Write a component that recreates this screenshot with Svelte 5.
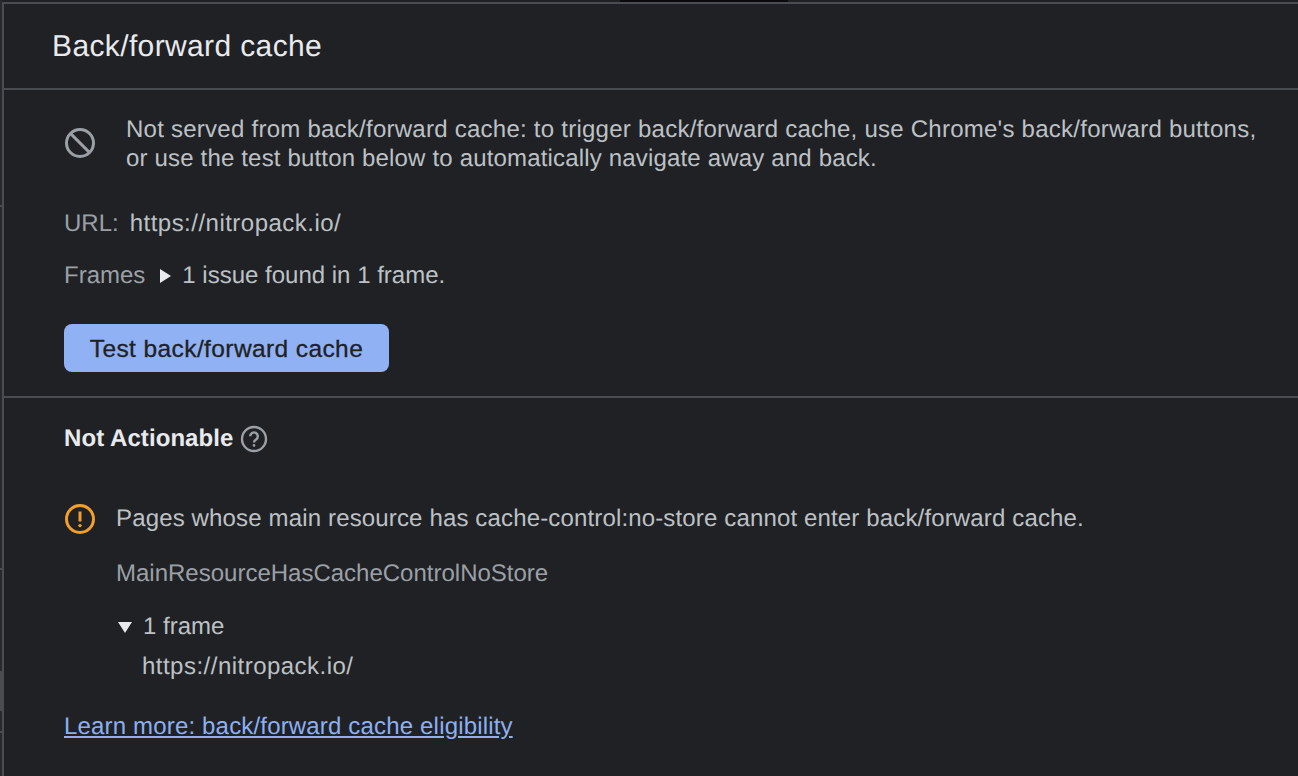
<script>
  const frameUrl = 'https://nitropack.io/';
  // bits of the neighbouring pane that show through the left rail
  const railMarks = [
    { top: 205, height: 2, color: '#494c50' },
    { top: 568, height: 2, color: '#494c50' },
    { top: 671, height: 40, color: '#4b4d4c' },
    { top: 731, height: 2, color: '#494c50' }
  ];
</script>

<div class="shell">
  <div class="notch"></div>
  <div class="rail">
    {#each railMarks as m}
      <span style="top:{m.top}px;height:{m.height}px;background:{m.color}"></span>
    {/each}
  </div>
  <main class="panel">
    <header class="title"><h1>Back/forward cache</h1></header>

    <section class="status">
      <div class="banner">
        <svg class="ban" viewBox="0 0 32 32" aria-hidden="true">
          <circle cx="16" cy="16" r="13.5" />
          <path d="M6.6 6.6 25.4 25.4" />
        </svg>
        <p>
          <span class="line-a">Not served from back/forward cache: to trigger back/forward cache, use Chrome's back/forward buttons,</span>
          <span class="line-b">or use the test button below to automatically navigate away and back.</span>
        </p>
      </div>
      <div class="row url"><span class="key">URL:</span><span class="link-text">{frameUrl}</span></div>
      <div class="row frames">
        <span class="key">Frames</span>
        <span class="tri right"></span>
        <span>1 issue found in 1 frame.</span>
      </div>
      <button class="test">Test back/forward cache</button>
    </section>

    <section class="issues">
      <h2>
        Not Actionable
        <svg class="help" viewBox="0 0 28 28" aria-hidden="true">
          <circle cx="14" cy="14" r="12" />
          <path d="M10.2 11.2a3.8 3.8 0 1 1 5.9 3.2c-1.3.8-2.1 1.5-2.1 3" />
          <circle class="dot" cx="14" cy="20.4" r="1.3" />
        </svg>
      </h2>
      <div class="issue">
        <svg class="warn" viewBox="0 0 32 32" aria-hidden="true">
          <circle cx="16" cy="16" r="13.5" />
          <path d="M16 8.5v10" />
          <circle class="dot" cx="16" cy="22.6" r="1.7" />
        </svg>
        <span>Pages whose main resource has cache-control:no-store cannot enter back/forward cache.</span>
      </div>
      <div class="detail reason">MainResourceHasCacheControlNoStore</div>
      <div class="detail count"><span class="tri down"></span><span>1 frame</span></div>
      <div class="detail frame-url"><span class="link-text">{frameUrl}</span></div>
      <a class="more" href="#eligibility">Learn more: back/forward cache eligibility</a>
    </section>
  </main>
</div>

<style>
  :global(body) {
    margin: 0;
    background: #202124;
  }
  .shell {
    position: relative;
    display: flex;
    height: 776px;
    overflow: hidden;
    background: #202124;
    font-family: "Liberation Sans", Arial, sans-serif;
    font-size: 24px;
    text-rendering: geometricPrecision;
    color: #bdc1c6;
  }
  .notch {
    position: absolute;
    top: 0;
    left: 620px;
    width: 168px;
    height: 2px;
    background: #0a0a0a;
  }
  .rail {
    position: relative;
    flex: none;
    width: 2px;
    background: #28292c;
  }
  .rail span {
    position: absolute;
    left: 0;
    width: 100%;
  }
  .panel {
    flex: 1;
    box-sizing: border-box;
    border-top: 2px solid #494c50;
    border-left: 2px solid #494c50;
    margin-top: 2px;
  }
  .title {
    height: 86px;
    box-sizing: border-box;
    border-bottom: 2px solid #494c50;
    padding: 2px 0 0 48px;
    display: flex;
    align-items: center;
  }
  h1 {
    margin: 0;
    font-size: 30px;
    letter-spacing: 0.37px;
    font-weight: 400;
    color: #e8eaed;
  }
  .status {
    height: 308px;
    box-sizing: border-box;
    border-bottom: 2px solid #494c50;
    padding: 25px 0 0 60px;
  }
  .banner {
    display: flex;
    align-items: center;
    gap: 30px;
  }
  .banner p {
    margin: 0;
    line-height: 29px;
  }
  .line-a,
  .line-b {
    display: block;
    white-space: nowrap;
  }
  .line-a {
    letter-spacing: 0.25px;
  }
  .line-b {
    letter-spacing: 0.17px;
  }
  .ban {
    width: 32px;
    height: 32px;
    flex: none;
    fill: none;
    stroke: #9aa0a6;
    stroke-width: 3;
    margin-top: -2px;
  }
  .row {
    display: flex;
    align-items: center;
    line-height: 29px;
  }
  .key {
    color: #9aa0a6;
  }
  .link-text {
    letter-spacing: 0.48px;
  }
  .url {
    margin-top: 36px;
    gap: 11px;
  }
  .frames {
    margin-top: 23px;
  }
  .frames .tri {
    margin: 0 11px 0 15px;
  }
  .tri {
    display: inline-block;
    width: 0;
    height: 0;
  }
  .tri.right {
    border-top: 7px solid transparent;
    border-bottom: 7px solid transparent;
    border-left: 11px solid #e8eaed;
  }
  .tri.down {
    margin-left: 2px;
    border-left: 7px solid transparent;
    border-right: 7px solid transparent;
    border-top: 11px solid #e8eaed;
  }
  .test {
    display: block;
    margin-top: 34px;
    width: 325px;
    height: 48px;
    padding: 2px 0 0;
    border: 0;
    border-radius: 8px;
    background: #90b1f3;
    color: #202124;
    font: inherit;
    font-size: 24.5px;
    letter-spacing: 0.4px;
    -webkit-text-stroke: 0.3px #202124;
  }
  .issues {
    padding: 26px 0 0 60px;
  }
  h2 {
    margin: 0;
    display: flex;
    align-items: center;
    gap: 7px;
    font-size: 24px;
    letter-spacing: 0.07px;
    line-height: 30px;
    font-weight: 700;
    color: #e8eaed;
  }
  .help {
    width: 28px;
    height: 28px;
    fill: none;
    stroke: #9aa0a6;
    stroke-width: 2.4;
  }
  .help .dot {
    fill: #9aa0a6;
    stroke: none;
  }
  .issue {
    margin-top: 49px;
    display: flex;
    align-items: center;
    gap: 20px;
    line-height: 30px;
    letter-spacing: 0.15px;
  }
  .warn {
    width: 32px;
    height: 32px;
    flex: none;
    fill: none;
    stroke: #f29f2c;
    stroke-width: 3;
  }
  .warn .dot {
    fill: #f29f2c;
    stroke: none;
  }
  .detail {
    margin-left: 52px;
    line-height: 30px;
  }
  .reason {
    margin-top: 24px;
    color: #9aa0a6;
  }
  .count {
    margin-top: 23px;
    display: flex;
    align-items: center;
    gap: 11px;
  }
  .frame-url {
    margin-top: 10px;
    padding-left: 26px;
  }
  .more {
    display: inline-block;
    margin-top: 30px;
    color: #8cb0f2;
    line-height: 30px;
    letter-spacing: 0.17px;
  }
</style>
